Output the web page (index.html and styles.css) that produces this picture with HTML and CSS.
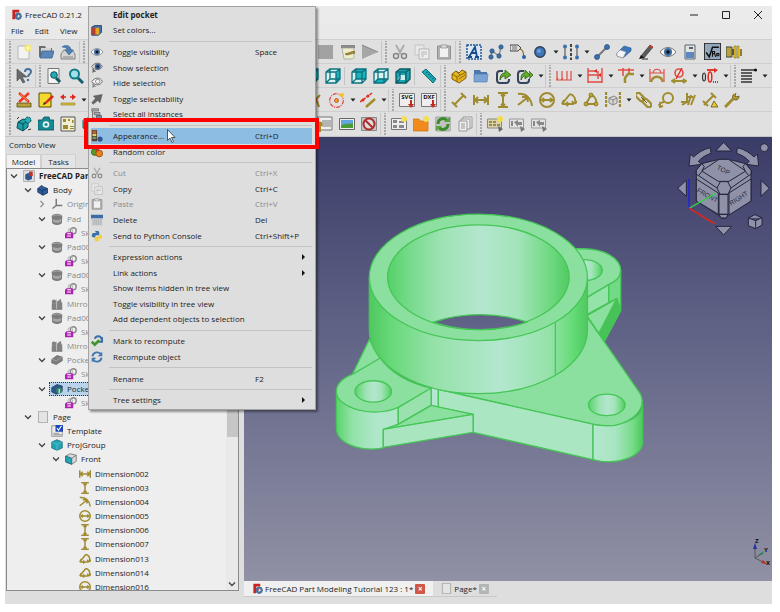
FILE: index.html
```html
<!DOCTYPE html>
<html lang="en">
<head>
<meta charset="utf-8">
<title>FreeCAD 0.21.2</title>
<link rel="stylesheet" href="styles.css">
</head>
<body>
<svg class="defs" aria-hidden="true">
  <symbol id="logo" viewBox="0 0 16 16"><path fill="#c8241f" d="M2 1h10v4H6v3h4v3H6v4H2z"/><circle cx="10.500" cy="10.500" r="3.500" fill="none" stroke="#47719f" stroke-width="3"/><path stroke="#47719f" stroke-width="1.500" d="M10.500 5.500v2M10.500 14v2M5.500 10.500h2M14 10.500h2M7 7l1 1M14 7l-1 1M7 14l1-1M14 14l-1-1"/></symbol>
  <symbol id="chev-d" viewBox="0 0 8 8"><path d="M1 2.500 4 5.500 7 2.500" fill="none" stroke="#444" stroke-width="1.300"/></symbol>
  <symbol id="chev-r" viewBox="0 0 8 8"><path d="M2.500 1 5.500 4 2.500 7" fill="none" stroke="#888" stroke-width="1.100"/></symbol>
  <symbol id="drop" viewBox="0 0 8 8"><path d="M1.500 2.500h5L4 5.500z" fill="#222"/></symbol>

  <symbol id="new" viewBox="0 0 16 16"><path d="M2 2h9l2 3v10H2z" fill="#f3f3f1" stroke="#aaa" stroke-width=".8"/><circle cx="12" cy="4" r="3.500" fill="#f5e96f"/><circle cx="12" cy="4" r="1.500" fill="#fffbd0"/></symbol>
  <symbol id="open" viewBox="0 0 16 16"><path d="M1 2h6l1 2h6v9H1z" fill="#6b6e70"/><path d="M3 4h10v5H3z" fill="#d5d5d5"/><path d="M2 14 4 7h12l-2 7z" fill="#5b87b8" stroke="#3a628f" stroke-width=".8"/></symbol>
  <symbol id="save" viewBox="0 0 16 16"><path d="M1 10 4 6h8l3 4v5H1z" fill="#d4d4d2" stroke="#777" stroke-width=".9"/><path d="M3 13h10" stroke="#888"/><path d="M2 3c4-3 9-1 9 3h2.500L9 11 5 6h2.500C7 4 5 3 2 3z" fill="#4f81b5" stroke="#315d8c" stroke-width=".6"/></symbol>
  <symbol id="whats" viewBox="0 0 16 16"><path d="M1 1v12l3-3 3 5 2-1-3-5h5z" fill="#666b6e" stroke="#444" stroke-width=".6"/><path d="M9 4c0-4 6-4 6 0 0 2-3 2-3 5" fill="none" stroke="#44729a" stroke-width="2"/><circle cx="12" cy="12" r="1.200" fill="#44729a"/></symbol>
  <symbol id="fit" viewBox="0 0 16 16"><path d="M2 .5h11v15H2z" fill="#f4f4f4" stroke="#777"/><circle cx="8" cy="7" r="3.300" fill="#25a9b5" stroke="#0c5962"/><path d="m10 10 4 4" stroke="#0c5962" stroke-width="3"/></symbol>
  <symbol id="zoom" viewBox="0 0 16 16"><circle cx="6.500" cy="6" r="4.500" fill="#a6dfe6" stroke="#0d7d8a" stroke-width="2"/><path d="m10 10 5 5" stroke="#0c616c" stroke-width="3"/></symbol>
  <symbol id="leave" viewBox="0 0 16 16"><path d="M1 11h14v4H1z" fill="#b6a13b" stroke="#594b10" stroke-width=".8"/><path d="m3 1 10 9M13 1 3 10" stroke="#ee3426" stroke-width="2.400"/><path d="m4 2 8 7" stroke="#f0a33a"/></symbol>
  <symbol id="sketch" viewBox="0 0 16 16"><path d="M1 1h12v14H1z" fill="#f6d92d" stroke="#5a4a08"/><path d="m6 11 8-8 2 2-8 7z" fill="#d42a1e"/><path d="m5 13 1-3 2 2z" fill="#222"/></symbol>
  <symbol id="leftright" viewBox="0 0 16 16"><path d="M0 5l4-3v6zM16 5l-4-3v6z" fill="#e2261c"/><path d="M3 5h3m4 0h3" stroke="#e2261c" stroke-width="1.500"/><path d="M1 11h14v2H1z" fill="#d9c23e" stroke="#8a7717" stroke-width=".6"/></symbol>
  <symbol id="blob" viewBox="0 0 16 16"><path d="m2 6 5-3 5 2v6l-5 4-6-3z" fill="#1a9fa9" stroke="#0a4f57"/><path d="M2 6 7 8l5-3M7 8v6" stroke="#0a4f57" fill="none"/><circle cx="12" cy="4" r="3" fill="#27aeb6" stroke="#0a4f57" stroke-dasharray="2 1"/><path d="M1 3l2-2M12 14l3-1" stroke="#333"/></symbol>
  <symbol id="camera" viewBox="0 0 16 16"><path d="M0 4h4l2-3h5l1 3h4v10H0z" fill="#138a94" stroke="#075059" stroke-width=".8"/><circle cx="8" cy="8.500" r="3.300" fill="#e8f2f2"/><circle cx="8" cy="8.500" r="1.600" fill="#138a94"/></symbol>
  <symbol id="macro" viewBox="0 0 16 16"><path d="M1 1h14v14H1z" fill="#f0eed4" stroke="#555"/><path d="M3 3h3v3H3zM8 3h2v2H8zM12 4h1.500v3H12zM3 9h5v4H3zM10 10h4v1h-4zM10 12h4v1h-4z" fill="#9c8a2f"/></symbol>

  <symbol id="stop" viewBox="0 0 16 16"><path d="M0 1h15v14H0z" fill="#a2a2a2"/></symbol>
  <symbol id="macroedit" viewBox="0 0 16 16"><path d="M1 1h14v3H1z" fill="#8a8a8a"/><path d="M2 4h12v9c0 2-2 2-3 2H4z" fill="#eeeecb" stroke="#999" stroke-width=".7"/><path d="m5 10 9-3 1 2-8 2z" fill="#b2913b" stroke="#57430e" stroke-width=".5"/></symbol>
  <symbol id="play" viewBox="0 0 16 16"><path d="M0 1v14l16-7z" fill="#a6a6a6"/><path d="M0 1l16 7" stroke="#888"/></symbol>
  <symbol id="cut" viewBox="0 0 16 16"><path d="M4 1l5 9M12 1l-5 9" stroke="#aaa" stroke-width="1.800"/><g fill="none" stroke="#888" stroke-width="1.500"><circle cx="4" cy="12" r="2.500"/><circle cx="12" cy="12" r="2.500"/></g></symbol>
  <symbol id="copy" viewBox="0 0 16 16"><path d="M1 1h9v10H1z" fill="#e8e8e8" stroke="#c4c4c4"/><path d="M5 5h10v10H5z" fill="#eee" stroke="#b3b3b3"/><path d="M7 8h6M7 10h6M7 12h3" stroke="#b5b5b5"/></symbol>
  <symbol id="paste" viewBox="0 0 16 16"><path d="M1.500 2h13v13h-13z" fill="#b0b0b0" stroke="#929292"/><path d="M4 4h8v9H4z" fill="#f1f1f1"/><path d="M5 1h6v3H5z" fill="#ddd" stroke="#888" stroke-width=".7"/></symbol>
  <symbol id="bigA" viewBox="0 0 16 16"><path d="M1 1h14v14H1z" fill="#dce8f4" stroke="#1e5794" stroke-width="1.500" stroke-dasharray="2 1"/><path d="m3 13 6-10 2 10M5 9h5M2 13h4m3 0h4" stroke="#174d8d" stroke-width="1.800" fill="none"/></symbol>
  <symbol id="nodes" viewBox="0 0 16 16"><path d="M3 13 4 7l7 5 2-9" fill="none" stroke="#888" stroke-width="1.300"/><g fill="#3c70b0" stroke="#22446f" stroke-width=".6"><circle cx="3" cy="13" r="2.200"/><circle cx="4" cy="7" r="2.200"/><circle cx="11" cy="12" r="2.200"/><circle cx="13" cy="3" r="2.200"/></g></symbol>
  <symbol id="tag" viewBox="0 0 16 16"><path d="M0 1h8l3 3-3 3H0z" fill="#ddd" stroke="#444"/><path d="M2 3h5M2 5h5" stroke="#777"/><path d="M10 5c4 1 3 4 4 8" fill="none" stroke="#876c1c" stroke-width="1.200"/><circle cx="14" cy="13" r="2" fill="#2c62a5"/></symbol>
  <symbol id="dot" viewBox="0 0 16 16"><circle cx="8" cy="8" r="5.200" fill="#3d76ba" stroke="#2d4058" stroke-width="1.400"/><circle cx="7" cy="7" r="2" fill="#6d9cd3"/></symbol>
  <symbol id="lines3" viewBox="0 0 16 16"><path d="M2 3v10M14 3v10" stroke="#777" stroke-width="1.500"/><path d="M8 0v16" stroke="#111" stroke-width="1.500" stroke-dasharray="3 1.500"/><g fill="#3c70b0"><circle cx="2" cy="2.500" r="2"/><circle cx="2" cy="13.500" r="2"/><circle cx="14" cy="2.500" r="2"/><circle cx="14" cy="13.500" r="2"/></g></symbol>
  <symbol id="seg" viewBox="0 0 16 16"><path d="M3 13 13 3" stroke="#777" stroke-width="2"/><circle cx="3" cy="13" r="2.500" fill="#3c70b0" stroke="#163a67" stroke-width=".6"/><circle cx="13" cy="3" r="2.500" fill="#3c70b0" stroke="#163a67" stroke-width=".6"/></symbol>
  <symbol id="eraser" viewBox="0 0 16 16"><path d="m1 9 7-7 7 2v3l-8 7-6-2z" fill="#3d77b9" stroke="#255081" stroke-width=".6"/><path d="m1 9 3-3 6 2-3 6-6-2z" fill="#f4f4f4" stroke="#999" stroke-width=".6"/></symbol>
  <symbol id="pencil" viewBox="0 0 16 16"><path d="m3 12 9-11 3 2-9 11z" fill="#5a5d60" stroke="#222" stroke-width=".6"/><path d="m12 1 3 2-1 2-3-2z" fill="#c93b2c"/><path d="M1 15l2-4 3 3z" fill="#111"/><path d="M4 15h6" stroke="#222"/></symbol>
  <symbol id="eye" viewBox="0 0 16 16"><path d="M0 8c4-6 12-6 16 0-4 6-12 6-16 0z" fill="#f5f5f5" stroke="#777"/><circle cx="8" cy="8" r="4" fill="#3f6ba3"/><circle cx="8" cy="8" r="1.800" fill="#111"/></symbol>
  <symbol id="calc" viewBox="0 0 16 16"><path d="M3 1h10v14H3z" fill="#dfe3e6" stroke="#59646b"/><path d="M4 8h8v6H4z" fill="#5b88bf"/><path d="M7 4h4" stroke="#333" stroke-width="1.500"/></symbol>
  <symbol id="rough" viewBox="0 0 16 16"><path d="M0 0h16v16H0z" fill="#93a7bd" stroke="#222" stroke-width="1.600"/><path d="M2 9l3 4 3-9h6" fill="none" stroke="#111" stroke-width="1.400"/><path d="M8 13V8h2v2H8m2 0 1 3m1-1h2v-2h-2z" fill="none" stroke="#111"/></symbol>
  <symbol id="weld" viewBox="0 0 16 16"><path d="M0 3h6v10H0z" fill="#b3a33f" stroke="#444"/><path d="M6 5h3v6H6z" fill="#555"/><path d="M8 2h2v12H8zM11 2h2v12h-2z" fill="#f4cb1e" stroke="#6a540b" stroke-width=".5"/><path d="M14 5h2v7h-2z" fill="#927f26"/></symbol>

  <symbol id="cube1" viewBox="0 0 16 16"><path d="M1 4 5 1h10v10l-4 4H1z" fill="#d8f1f2"/><path d="M11 5v10l4-4V1z" fill="#18b1bd"/><path d="M1 4 5 1h10v10l-4 4H1zM1 4h10v11M11 4l4-3M5 1v10M1 15l4-4h10" fill="none" stroke="#0d727d" stroke-width="1.300"/></symbol>
  <symbol id="cube2" viewBox="0 0 16 16"><path d="M1 4 5 1h10v10l-4 4H1z" fill="#d8f1f2"/><path d="M5 1h10v10H5z" fill="#18b1bd"/><path d="M1 4 5 1h10v10l-4 4H1zM1 4h10v11M11 4l4-3M5 1v10M1 15l4-4h10" fill="none" stroke="#0d727d" stroke-width="1.300"/></symbol>
  <symbol id="cube3" viewBox="0 0 16 16"><path d="M1 4 5 1h10v10l-4 4H1z" fill="#d8f1f2"/><path d="M1 15l4-4h10l-4 4z" fill="#18b1bd"/><path d="M1 4 5 1h10v10l-4 4H1zM1 4h10v11M11 4l4-3M5 1v10M1 15l4-4h10" fill="none" stroke="#0d727d" stroke-width="1.300"/></symbol>
  <symbol id="cube4" viewBox="0 0 16 16"><path d="M1 4 5 1h10v10l-4 4H1z" fill="#18a5b1" stroke="#0b5962" stroke-width="1.300"/><path d="M5 7h5v5H3z" fill="#cdeef0"/><path d="M1 4h10v11M11 4l4-3M5 5v6l-4 4" fill="none" stroke="#0b5962" stroke-width="1.200"/></symbol>
  <symbol id="ruler" viewBox="0 0 16 16"><path d="m1 4 4-3 10 10-3 4z" fill="#1aa9b5" stroke="#0b6b75"/><path d="m5 5 2-1m0 3 2-1m0 3 2-1m0 3 2-1" stroke="#0b5962" stroke-width=".8"/></symbol>
  <symbol id="gold" viewBox="0 0 16 16"><path d="m1 6 4-3 3 2 3-3 4 2v6l-7 5-7-4z" fill="#e4b51c" stroke="#7f600f"/><path d="m1 6 5 3 9-5M6 9v5M5 3l4 4M8 11l6-4" fill="none" stroke="#7f600f" stroke-width=".9"/></symbol>
  <symbol id="folder" viewBox="0 0 16 16"><path d="M1 2h6l1 2h6v10H1z" fill="#4c78ab"/><path d="M1 6h14l-1 8H1z" fill="#7ba3d3" stroke="#4c78ab" stroke-width=".6"/></symbol>
  <symbol id="link" viewBox="0 0 16 16"><path d="M8 3H5Q2 3 2 6v6q0 3 3 3h6q3 0 3-3v-1" fill="none" stroke="#33455c" stroke-width="2"/><path d="M5 12c0-5 2-7 5-7V2l6 5-6 4V8c-3 0-4 2-5 4z" fill="#63ac2e" stroke="#2d5e10" stroke-width=".8"/></symbol>
  <symbol id="links" viewBox="0 0 16 16"><path d="M7 3H4Q1 3 1 6v6q0 3 3 3h5q3 0 3-3v-1" fill="none" stroke="#33455c" stroke-width="2"/><path d="M4 12c0-5 1-7 4-7V2l5 5-5 4V8c-2 0-3 2-4 4zM12 3l4 4-4 4" fill="#63ac2e" stroke="#2d5e10" stroke-width=".8"/></symbol>
  <symbol id="r-chain" viewBox="0 0 16 16"><path d="M0 12h16M1 3v9M6 3v9M11 3v9M15 3v9M0 12l2-2M5 12l2-2" fill="none" stroke="#e24a40" stroke-width="1.200"/></symbol>
  <symbol id="r-coord" viewBox="0 0 16 16"><path d="M1 0v15M15 0v15M11 3v8M1 3h9M1 7h10M1 14h14" fill="none" stroke="#e24a40" stroke-width="1.400"/><path d="M10 1v4L7 3zM14 5v4l-3-2z" fill="#df2b20"/></symbol>
  <symbol id="r-chamfer" viewBox="0 0 16 16"><path d="M0 2h16M5 0v8M11 0v5" stroke="#e24a40" stroke-width="1.500"/><path d="M7 15v-5l3-4h6" fill="none" stroke="#a18e30" stroke-width="2.500"/></symbol>
  <symbol id="r-arc" viewBox="0 0 16 16"><path d="M1 1v13M15 1v13M1 5h14M4 5c1-5 7-5 8 0" fill="none" stroke="#e24a40" stroke-width="1.200"/><path d="M2 14c2-7 10-7 12 0" fill="none" stroke="#a18e30" stroke-width="2.500"/></symbol>
  <symbol id="r-dia" viewBox="0 0 16 16"><circle cx="8" cy="5" r="4" fill="none" stroke="#e24a40" stroke-width="1.600"/><path d="M5 11 11 0" stroke="#df2b20" stroke-width="1.300"/><path d="M1 13h14M4 11l-3 2 3 2M12 11l3 2-3 2" fill="none" stroke="#a18e30" stroke-width="2"/></symbol>
  <symbol id="r-fmt" viewBox="0 0 16 16"><ellipse cx="2" cy="9" rx="1.500" ry="4" fill="none" stroke="#333" stroke-width="1.200"/><ellipse cx="8" cy="9" rx="1.800" ry="5" fill="none" stroke="#df2b20" stroke-width="1.500"/><path d="M5 2h8" stroke="#df2b20" stroke-width="1.800"/><path d="M11 14h5" stroke="#df2b20" stroke-width="1.800" stroke-dasharray="1 1"/><path d="m12 0 4 2-4 3z" fill="#df2b20"/></symbol>
  <symbol id="hatch" viewBox="0 0 16 16"><path d="M0 2h16M0 5h11M0 8h11M0 11h11M0 14h11" stroke="#333" stroke-width="1.500"/><circle cx="14.500" cy="2" r="1.500" fill="#111"/></symbol>

  <symbol id="point" viewBox="0 0 16 16"><path d="M2 2c6 3 9 8 10 13M3 14 13 3" stroke="#9a8527" stroke-width="2" fill="none"/><circle cx="8" cy="8" r="2" fill="#f0441e"/></symbol>
  <symbol id="circ" viewBox="0 0 16 16"><circle cx="7.500" cy="8.500" r="6.800" fill="none" stroke="#e5473c" stroke-width="1.200" stroke-dasharray="4 1 1 1"/><circle cx="7.500" cy="8.500" r="2" fill="#e8a21c" stroke="#b3361a" stroke-width=".7"/><circle cx="13" cy="3" r="2" fill="#f2c81e"/></symbol>
  <symbol id="cline" viewBox="0 0 16 16"><path d="M0 10 12 1" stroke="#e12c20" stroke-width="1.500" stroke-dasharray="3 1"/><circle cx="3" cy="8" r="1.500" fill="#e12c20"/><circle cx="8" cy="4" r="1.500" fill="#e12c20"/><path d="m6 15 9-8" stroke="#a18c2a" stroke-width="2.500"/></symbol>
  <symbol id="plate" viewBox="0 0 16 16"><path d="M.5 1.500h15v13H.5z" fill="#eee" stroke="#777"/><path d="M11 8v4H9l3 4 3-4h-2V8z" fill="#c92a20"/></symbol>
  <symbol id="d-len" viewBox="0 0 16 16"><path class="olive" d="M3 13 13 3M1 10l5 5M10 1l5 5"/></symbol>
  <symbol id="d-h" viewBox="0 0 16 16"><path class="olive" d="M1 3v10M15 3v10M2 8h12M5 5 2 8l3 3M11 5l3 3-3 3"/></symbol>
  <symbol id="d-v" viewBox="0 0 16 16"><path class="olive" d="M3 1h10M3 15h10M8 2v12M6 4l2-2 2 2M6 12l2 2 2-2"/></symbol>
  <symbol id="d-r" viewBox="0 0 16 16"><path class="olive" d="M1 2c8-1 13 4 14 12M1 13l9-7M5 5h5l1 5"/></symbol>
  <symbol id="d-d" viewBox="0 0 16 16"><circle class="olive" cx="8" cy="8" r="7"/><path class="olive" d="M2 8h12M5 6 3 8l2 2M11 6l2 2-2 2"/></symbol>
  <symbol id="d-a" viewBox="0 0 16 16"><path class="olive" d="M1 12 9 2M1 12h12M9 2c4 1 6 5 5 10M1 12l2-4M7 14l-2-2 2-2M13 12l-2-3M14 12l2-3"/></symbol>
  <symbol id="d-a3" viewBox="0 0 16 16"><path class="olive" d="M3 12h10M3 12 8 3M8 3c4 1 6 5 5 9"/><g fill="#c2a62b" stroke="#7a681c" stroke-width=".7"><circle cx="3" cy="12" r="2"/><circle cx="8" cy="3" r="2"/><circle cx="13" cy="12" r="2"/></g></symbol>
  <symbol id="d-ext" viewBox="0 0 16 16"><path d="M1 0v16M15 0v16" stroke="#a08c30" stroke-width="2.400" stroke-dasharray="3 1"/><path d="m4 6 5-2 3 2v5l-4 2-4-2z" fill="#d5d5d5" stroke="#888"/><path d="m4 6 4 2 4-2M8 8v5" fill="none" stroke="#888"/></symbol>
  <symbol id="chain" viewBox="0 0 16 16"><g fill="none" stroke="#a08c30" stroke-width="2.200"><rect x="-1" y="2.500" width="10" height="5" rx="2.500" transform="rotate(45 4 5)"/><rect x="6" y="8.500" width="10" height="5" rx="2.500" transform="rotate(45 11 11)"/></g><path d="m5 5 6 6" stroke="#6e5e1c"/></symbol>
  <symbol id="balloon" viewBox="0 0 16 16"><circle class="olive" cx="10" cy="6" r="5"/><path class="olive" d="M6 10l-4 1v4M1 12l1 3 3-1"/></symbol>
  <symbol id="axo" viewBox="0 0 16 16"><path class="olive" d="M7 1v9H1M2 13l5-3M15 3l-4 10M11 3l-3 10M8 5h5"/></symbol>
  <symbol id="landmark" viewBox="0 0 16 16"><path class="olive" d="M2 13 12 3M1 9l5 5M9 1l5 5"/><path d="m12 9 4 6H9z" fill="#e7cb37" stroke="#5e4e10" stroke-width=".8"/></symbol>
  <symbol id="wrench" viewBox="0 0 16 16"><path d="m1 15 8-8" stroke="#a08c30" stroke-width="3"/><path d="M10 2c-3 3-1 6 2 6 2 0 3-2 3-4l-3 1-1-1 1-3" fill="#b59d31" stroke="#5e4e10" stroke-width=".8"/></symbol>

  <symbol id="symb" viewBox="0 0 16 16"><path d="M0 1h15v13H0z" fill="#eee" stroke="#777"/><path d="M5 4h9v7H5z" fill="#b5b5b5"/><circle cx="3" cy="8" r="2.500" fill="#a08d25"/><path d="M3 9v7" stroke="#a08d25" stroke-width="2"/></symbol>
  <symbol id="img" viewBox="0 0 16 16"><path d="M.5 2.500h15v11H.5z" fill="#eee" stroke="#666"/><path d="M2 4h12v8H2z" fill="#65a5df"/><path d="M2 10c4-4 8-1 12-3v5H2z" fill="#4c9b38"/></symbol>
  <symbol id="forbid" viewBox="0 0 16 16"><path d="M.5 1.500h15v13H.5z" fill="#c3c3c3" stroke="#888"/><circle cx="8" cy="8" r="5.500" fill="#ddd" stroke="#b02c2c" stroke-width="2"/><path d="m4 4 8 8" stroke="#b02c2c" stroke-width="2"/></symbol>
  <symbol id="page" viewBox="0 0 16 16"><path d="M.5 2.500h15v11H.5z" fill="#eee" stroke="#777"/><path d="M2 4h4v3H2zM8 5h5v2H8zM2 9h4v3H2zM8 9h5v3H8z" fill="#888"/><circle cx="13" cy="3" r="3" fill="#f2dd55"/></symbol>
  <symbol id="ofold" viewBox="0 0 16 16"><path d="M0 3h6l1 2h8v10H0z" fill="#f28a1c" stroke="#d26e08" stroke-width=".7"/><circle cx="13" cy="3" r="3" fill="#f2dd55"/></symbol>
  <symbol id="recomp" viewBox="0 0 16 16"><rect y="1" width="16" height="14" rx="2" fill="#c2c2c2" stroke="#999" stroke-width=".8"/><path d="M3 8c0-6 7-7 9-3M13 8c0 6-7 7-9 3" fill="none" stroke="#3c8a2b" stroke-width="3"/><path d="M9 6h6V1zM7 10H1v5z" fill="#53a638"/></symbol>
  <symbol id="pages" viewBox="0 0 16 16"><g fill="#eee" stroke="#999"><path d="M6 1h9v11H6z"/><path d="M4 3h9v10H4z"/><path d="M2 5h8v10H2z"/></g><path d="M4 8h4M4 10h4M4 12h4" stroke="#999"/></symbol>
  <symbol id="view-g" viewBox="0 0 16 16"><path d="M.5 3h14v9H.5z" fill="#e3e3e3" stroke="#999"/><path d="M2 5h2v5H2zM5 6l4-2v2h4v3H9v2z" fill="#888"/><path d="m11 10 5 3-4 3z" fill="#777"/></symbol>
  <symbol id="view-y" viewBox="0 0 16 16"><path d="M.5 3h14v9H.5z" fill="#d9d2aa" stroke="#888"/><path d="M2 5h3v2H2zM6 5h3v2H6zM2 8h3v2H2zM6 8h3v2H6zM10 8h3v2h-3z" fill="#998b49"/><path d="m11 10 5 3-4 3z" fill="#666"/><circle cx="13" cy="3" r="3" fill="#f0dd48"/></symbol>

  <symbol id="m-colors" viewBox="0 0 16 16"><path d="m1 4 4-2h9v9l-4 4H1z" fill="#3c6db0" stroke="#25354d"/><path d="M1 5h5v9H1z" fill="#b63c2d"/><path d="M6 5h5v9H6z" fill="#e2a824"/></symbol>
  <symbol id="m-showsel" viewBox="0 0 16 16"><path d="M1 6c4-6 12-6 14 0-2 5-10 6-14 0z" fill="#ddd" stroke="#555"/><circle cx="9" cy="6" r="4" fill="#3b5f90"/><circle cx="9" cy="6" r="1.500" fill="#111"/><path d="M2 8v7l2-2h3z" fill="#666"/></symbol>
  <symbol id="m-hidesel" viewBox="0 0 16 16"><path d="M1 6c4-6 12-6 14 0-2 6-10 6-14 0z" fill="#eee" stroke="#555"/><circle cx="9" cy="6" r="3" fill="none" stroke="#777"/><path d="M2 8v7l2-2h3z" fill="#888"/></symbol>
  <symbol id="m-arrow" viewBox="0 0 16 16"><path d="M15 2 3 4l3 3-5 6 2 2 6-5 3 3z" fill="#666" stroke="#444" stroke-width=".5"/></symbol>
  <symbol id="m-inst" viewBox="0 0 16 16"><path d="M1 1h9v3H1zM4 6h8v3H4z" fill="#aab" stroke="#666"/><path d="M2 4v9h3" fill="none" stroke="#555"/><path d="M7 10h7v5H7z" fill="#7a8ba5" stroke="#555"/></symbol>
  <symbol id="m-appear" viewBox="0 0 16 16"><path d="M1 0h7v15H1z" fill="#5c4030"/><path d="M2 1h5v3H2z" fill="#c0652f"/><path d="M2 5h5v3H2z" fill="#e8cf6c"/><path d="M2 9h5v3H2z" fill="#6c9a6a"/><circle cx="12" cy="12" r="3.500" fill="#2c5687"/></symbol>
  <symbol id="m-rand" viewBox="0 0 16 16"><circle cx="5" cy="8" r="4.500" fill="#589c2c" stroke="#37580f"/><circle cx="11" cy="10" r="4.500" fill="#e58219" stroke="#864607"/><circle cx="8" cy="4" r="3" fill="#bd3a2a"/></symbol>
  <symbol id="m-del" viewBox="0 0 16 16"><path d="M0 1h16v5H0z" fill="#3c6ca6"/><path d="M1 6h14v9H1z" fill="#c6cacd"/><path d="M4 7v8m3-8v8m3-8v8m3-8v8" stroke="#aaa"/></symbol>
  <symbol id="m-py" viewBox="0 0 16 16"><path d="M5 3q0-2 3-2 3 0 3 2v4H6v3H4Q1 10 1 7q0-3 3-3h3V3z" fill="#3a6ea5"/><path d="M11 6h1q3 0 3 3t-3 3H9v1h2q0 2-3 2-3 0-3-2V9h6z" fill="#f2cf3a"/></symbol>
  <symbol id="m-mark" viewBox="0 0 16 16"><path d="M5 5c2-5 8-4 9 0l1-2v6h-5" fill="none" stroke="#3b6ea8" stroke-width="2.500"/><path d="m1 9 4 4 6-6" fill="none" stroke="#43912c" stroke-width="3.500"/></symbol>
  <symbol id="m-recomp" viewBox="0 0 16 16"><path d="M2 7c1-6 9-7 12-2M14 9c-1 6-9 7-12 2" fill="none" stroke="#3f76b3" stroke-width="2.500"/><path d="M9 7h6V1zM7 9H1v6z" fill="#3f76b3"/></symbol>

  <symbol id="t-doc" viewBox="0 0 16 16"><rect x=".5" y=".5" width="15" height="15" rx="1" fill="#ddd" stroke="#999"/><path d="m3 6 4-2 5 2v6l-5 2-4-2z" fill="#2e558c"/><path d="M8 2h5v6H8z" fill="#c03328"/></symbol>
  <symbol id="t-body" viewBox="0 0 16 16"><path d="m1 6 5-4 3 2 5 2v6l-6 3-7-4z" fill="#2b5b9b" stroke="#17325a"/><path d="m1 6 6 3 7-3M7 9v6" fill="none" stroke="#17325a"/></symbol>
  <symbol id="t-axes" viewBox="0 0 16 16"><path d="M7 1v9h8M7 10l-5 4" stroke="#777" stroke-width="2" fill="none"/></symbol>
  <symbol id="t-pad" viewBox="0 0 16 16"><path d="M2 6h12v7c-2 3-10 3-12 0z" fill="#a5a5a5" stroke="#6c6c6c"/><path d="M1 4c3-4 11-4 14 0v3c-3 3-11 3-14 0zM2 11c3 3 9 3 12 0v3c-3 2-9 2-12 0z" fill="#7c7c7c"/><path d="M3 4c3-2 7-2 10 0" fill="none" stroke="#b5b5b5"/></symbol>
  <symbol id="t-sk" viewBox="0 0 16 16"><circle cx="11" cy="5" r="4" fill="none" stroke="#888" stroke-width="1.800"/><circle cx="7" cy="5" r="3" fill="none" stroke="#aaa" stroke-width="1.200"/><path d="M2 7h7c2 0 2 1 2 8H0V9z" fill="#ae22b2"/><path d="M3 9h5M3 12h5" stroke="#fff" stroke-width="1.600"/></symbol>
  <symbol id="t-mir" viewBox="0 0 16 16"><path d="M1 7h6v8H1zM8 5l5-4 1 5h1v9H8z" fill="#828282"/><path d="M7.500 2v13" stroke="#aaa"/><path d="M1 15h14" stroke="#666"/><circle cx="4" cy="5" r="3" fill="#828282"/></symbol>
  <symbol id="t-pock" viewBox="0 0 16 16"><path d="m1 7 7-5 7 2v5l-8 5-6-2z" fill="#7c7c7c" stroke="#707070"/><path d="m1 7 6 2 8-5" fill="none" stroke="#aaa"/></symbol>
  <symbol id="t-pockc" viewBox="0 0 16 16"><path d="m1 6 7-4 7 2v7l-8 4-6-3z" fill="#2d5789" stroke="#29415f"/><circle cx="11" cy="10" r="4" fill="#35856b"/><path d="M11 8v4m-1 1h2" stroke="#d8f3e4" stroke-width="1.500"/></symbol>
  <symbol id="t-page" viewBox="0 0 16 16"><path d="M2 .5h12v15H2z" fill="#e4e4e4" stroke="#999"/></symbol>
  <symbol id="t-tpl" viewBox="0 0 16 16"><path d="M1 1h14v14H1z" fill="#eee" stroke="#777"/><path d="M6 0h10v9H6z" fill="#1c46b8"/><path d="m8 4 2 3 4-6" stroke="#fff" stroke-width="1.500" fill="none"/><path d="M3 11h8M3 13h11" stroke="#777"/></symbol>
  <symbol id="t-proj" viewBox="0 0 16 16"><path d="m1 4 7-3 7 3v8l-7 3-7-3z" fill="#23a5b5" stroke="#126774"/><path d="m1 4 7 3 7-3M8 7v8" fill="none" stroke="#5fc0cb"/></symbol>
  <symbol id="t-front" viewBox="0 0 16 16"><path d="m1 4 6-3 8 2v8l-6 4-8-3z" fill="#d9d9d9" stroke="#666"/><path d="m1 4 8 3v8l-8-3z" fill="#23a5b5" stroke="#126774"/><path d="m9 7 6-4" stroke="#666"/></symbol>
</svg>

<div class="window">
  <header class="titlebar">
    <svg class="app-icon"><use href="#logo"/></svg>
    <span class="app-name">FreeCAD 0.21.2</span>
    <div class="controls">
      <button type="button" aria-label="Minimize"><svg viewBox="0 0 8 8"><path d="M0 4h8"/></svg></button>
      <button type="button" aria-label="Maximize"><svg viewBox="0 0 8 8"><path d="M.5.500h7v7h-7z"/></svg></button>
      <button type="button" aria-label="Close"><svg viewBox="0 0 8 8"><path d="m0 0 8 8M8 0 0 8"/></svg></button>
    </div>
  </header>
  <nav class="menubar"><button type="button">File</button><button type="button">Edit</button><button type="button">View</button></nav>

  <div class="toolbars">
    <div class="row">
      <div class="docked file-bar">
        <i class="grip"></i><button type="button" aria-label="New"><svg><use href="#new"/></svg></button><button type="button" aria-label="Open"><svg><use href="#open"/></svg></button><button type="button" aria-label="Save"><svg><use href="#save"/></svg></button><i class="grip"></i>
      </div>
      <button type="button" aria-label="Stop"><svg><use href="#stop"/></svg></button><button type="button" aria-label="Macros"><svg><use href="#macroedit"/></svg></button><button type="button" aria-label="Run"><svg><use href="#play"/></svg></button><i class="grip"></i>
      <button type="button" aria-label="Cut"><svg><use href="#cut"/></svg></button><button type="button" aria-label="Copy"><svg><use href="#copy"/></svg></button><button type="button" aria-label="Paste"><svg><use href="#paste"/></svg></button><i class="grip"></i>
      <button type="button" aria-label="Annotation"><svg><use href="#bigA"/></svg></button><button type="button" aria-label="Leader"><svg><use href="#nodes"/></svg></button><button type="button" aria-label="Rich text"><svg><use href="#tag"/></svg></button><button type="button" aria-label="Vertex"><svg><use href="#dot"/></svg></button><button type="button" class="drop" aria-label="More vertices"><svg><use href="#drop"/></svg></button>
      <button type="button" aria-label="Centerline"><svg><use href="#lines3"/></svg></button><button type="button" class="drop" aria-label="More centerlines"><svg><use href="#drop"/></svg></button><button type="button" aria-label="Line"><svg><use href="#seg"/></svg></button><button type="button" aria-label="Erase"><svg><use href="#eraser"/></svg></button><button type="button" aria-label="Line style"><svg><use href="#pencil"/></svg></button><button type="button" aria-label="Show all"><svg><use href="#eye"/></svg></button><button type="button" aria-label="Calculate"><svg><use href="#calc"/></svg></button><button type="button" aria-label="Roughness"><svg class="large"><use href="#rough"/></svg></button><button type="button" aria-label="Weld"><svg><use href="#weld"/></svg></button>
    </div>
    <div class="row">
      <div class="docked view-bar">
        <i class="grip"></i><button type="button" aria-label="Help"><svg><use href="#whats"/></svg></button><i class="grip"></i><button type="button" aria-label="Fit all"><svg><use href="#fit"/></svg></button><button type="button" aria-label="Zoom"><svg><use href="#zoom"/></svg></button>
      </div>
      <button type="button" aria-label="Top"><svg><use href="#cube2"/></svg></button><button type="button" aria-label="Right"><svg><use href="#cube1"/></svg></button><i class="sep"></i><button type="button" aria-label="Rear"><svg><use href="#cube2"/></svg></button><button type="button" aria-label="Bottom"><svg><use href="#cube3"/></svg></button><button type="button" aria-label="Left"><svg><use href="#cube4"/></svg></button><i class="sep"></i><button type="button" aria-label="Measure"><svg><use href="#ruler"/></svg></button><i class="grip"></i>
      <button type="button" aria-label="Part"><svg><use href="#gold"/></svg></button><button type="button" aria-label="Group"><svg><use href="#folder"/></svg></button><button type="button" aria-label="Link"><svg><use href="#link"/></svg></button><button type="button" aria-label="Sublink"><svg><use href="#links"/></svg></button><button type="button" class="drop" aria-label="More links"><svg><use href="#drop"/></svg></button><i class="grip"></i>
      <button type="button" aria-label="Chain dimension"><svg><use href="#r-chain"/></svg></button><button type="button" class="drop" aria-label="More chain"><svg><use href="#drop"/></svg></button><button type="button" aria-label="Coordinate dimension"><svg><use href="#r-coord"/></svg></button><button type="button" class="drop" aria-label="More coordinate"><svg><use href="#drop"/></svg></button><button type="button" aria-label="Chamfer"><svg><use href="#r-chamfer"/></svg></button><button type="button" class="drop" aria-label="More chamfer"><svg><use href="#drop"/></svg></button><button type="button" aria-label="Arc length"><svg><use href="#r-arc"/></svg></button><button type="button" aria-label="Prefix"><svg><use href="#r-dia"/></svg></button><button type="button" class="drop" aria-label="More prefix"><svg><use href="#drop"/></svg></button><button type="button" aria-label="Decimals"><svg><use href="#r-fmt"/></svg></button><button type="button" class="drop" aria-label="More decimals"><svg><use href="#drop"/></svg></button><i class="grip"></i>
      <button type="button" aria-label="Line attributes"><svg><use href="#hatch"/></svg></button><button type="button" class="drop" aria-label="More attributes"><svg><use href="#drop"/></svg></button>
    </div>
    <div class="row">
      <div class="docked sketch-bar">
        <i class="grip"></i><button type="button" aria-label="Leave"><svg><use href="#leave"/></svg></button><button type="button" aria-label="Edit sketch"><svg><use href="#sketch"/></svg></button><button type="button" aria-label="Extend"><svg><use href="#leftright"/></svg></button><button type="button" class="drop" aria-label="More extend"><svg><use href="#drop"/></svg></button>
      </div>
      <button type="button" aria-label="Intersection"><svg><use href="#point"/></svg></button><button type="button" aria-label="Circle lines"><svg><use href="#circ"/></svg></button><button type="button" class="drop" aria-label="More circles"><svg><use href="#drop"/></svg></button><button type="button" aria-label="Parallel"><svg><use href="#cline"/></svg></button><button type="button" class="drop" aria-label="More lines"><svg><use href="#drop"/></svg></button><i class="grip"></i>
      <button type="button" class="export"><svg><use href="#plate"/></svg><span>SVG</span></button><button type="button" class="export"><svg><use href="#plate"/></svg><span>DXF</span></button><i class="grip"></i>
      <button type="button" aria-label="Length"><svg><use href="#d-len"/></svg></button><button type="button" aria-label="Horizontal"><svg><use href="#d-h"/></svg></button><button type="button" aria-label="Vertical"><svg><use href="#d-v"/></svg></button><button type="button" aria-label="Radius"><svg><use href="#d-r"/></svg></button><button type="button" aria-label="Diameter"><svg><use href="#d-d"/></svg></button><button type="button" aria-label="Angle"><svg><use href="#d-a"/></svg></button><button type="button" aria-label="Three point angle"><svg><use href="#d-a3"/></svg></button><button type="button" aria-label="Extent"><svg><use href="#d-ext"/></svg></button><button type="button" class="drop" aria-label="More extent"><svg><use href="#drop"/></svg></button><button type="button" aria-label="Link dimension"><svg><use href="#chain"/></svg></button><button type="button" aria-label="Balloon"><svg><use href="#balloon"/></svg></button><button type="button" aria-label="Axonometric"><svg><use href="#axo"/></svg></button><button type="button" aria-label="Landmark"><svg><use href="#landmark"/></svg></button><button type="button" aria-label="Repair"><svg><use href="#wrench"/></svg></button>
    </div>
    <div class="row">
      <div class="docked page-bar">
        <i class="grip"></i><button type="button" aria-label="Bodies"><svg><use href="#blob"/></svg></button><button type="button" aria-label="Camera"><svg><use href="#camera"/></svg></button><button type="button" aria-label="Sheet"><svg><use href="#macro"/></svg></button><button type="button" aria-label="Solid"><svg><use href="#t-proj"/></svg></button>
      </div>
      <button type="button" aria-label="Symbol"><svg><use href="#symb"/></svg></button><button type="button" aria-label="Image"><svg><use href="#img"/></svg></button><button type="button" aria-label="Hide"><svg><use href="#forbid"/></svg></button><i class="grip"></i>
      <button type="button" aria-label="New page"><svg><use href="#page"/></svg></button><button type="button" aria-label="Page from template"><svg><use href="#ofold"/></svg></button><button type="button" aria-label="Redraw"><svg><use href="#recomp"/></svg></button><button type="button" aria-label="Print all"><svg><use href="#pages"/></svg></button><i class="grip"></i>
      <button type="button" aria-label="Insert view"><svg><use href="#view-y"/></svg></button><button type="button" aria-label="Share view"><svg><use href="#view-g"/></svg></button><button type="button" aria-label="Stack view"><svg><use href="#view-g"/></svg></button>
    </div>
  </div>

  <main class="workspace">
    <section class="combo">
      <h2>Combo View</h2>
      <div class="tabs"><button type="button" class="on">Model</button><button type="button">Tasks</button></div>
      <div class="treebox">
        <ul class="tree">
          <li class="l0 root"><svg class="chev"><use href="#chev-d"/></svg><svg><use href="#t-doc"/></svg><span>FreeCAD Par</span></li>
          <li class="l1"><svg class="chev"><use href="#chev-d"/></svg><svg><use href="#t-body"/></svg><span>Body</span></li>
          <li class="l2 off"><svg class="chev"><use href="#chev-r"/></svg><svg><use href="#t-axes"/></svg><span>Origin</span></li>
          <li class="l2 off"><svg class="chev"><use href="#chev-d"/></svg><svg><use href="#t-pad"/></svg><span>Pad</span></li>
          <li class="l3 off"><i class="chev"></i><svg><use href="#t-sk"/></svg><span>Sk</span></li>
          <li class="l2 off"><svg class="chev"><use href="#chev-d"/></svg><svg><use href="#t-pad"/></svg><span>Pad00</span></li>
          <li class="l3 off"><i class="chev"></i><svg><use href="#t-sk"/></svg><span>Sk</span></li>
          <li class="l2 off"><svg class="chev"><use href="#chev-d"/></svg><svg><use href="#t-pad"/></svg><span>Pad00</span></li>
          <li class="l3 off"><i class="chev"></i><svg><use href="#t-sk"/></svg><span>Sk</span></li>
          <li class="l2 off"><i class="chev"></i><svg><use href="#t-mir"/></svg><span>Mirro</span></li>
          <li class="l2 off"><svg class="chev"><use href="#chev-d"/></svg><svg><use href="#t-pad"/></svg><span>Pad00</span></li>
          <li class="l3 off"><i class="chev"></i><svg><use href="#t-sk"/></svg><span>Sk</span></li>
          <li class="l2 off"><i class="chev"></i><svg><use href="#t-mir"/></svg><span>Mirro</span></li>
          <li class="l2 off"><svg class="chev"><use href="#chev-d"/></svg><svg><use href="#t-pock"/></svg><span>Pocke</span></li>
          <li class="l3 off"><i class="chev"></i><svg><use href="#t-sk"/></svg><span>Sk</span></li>
          <li class="l2"><svg class="chev"><use href="#chev-d"/></svg><span class="picked"><svg><use href="#t-pockc"/></svg>Pocke</span></li>
          <li class="l3 off"><i class="chev"></i><svg><use href="#t-sk"/></svg><span>Sk</span></li>
          <li class="l1"><svg class="chev"><use href="#chev-d"/></svg><svg><use href="#t-page"/></svg><span>Page</span></li>
          <li class="l2"><i class="chev"></i><svg><use href="#t-tpl"/></svg><span>Template</span></li>
          <li class="l2"><svg class="chev"><use href="#chev-d"/></svg><svg><use href="#t-proj"/></svg><span>ProjGroup</span></li>
          <li class="l3"><svg class="chev"><use href="#chev-d"/></svg><svg><use href="#t-front"/></svg><span>Front</span></li>
          <li class="l4"><i class="chev"></i><svg><use href="#d-h"/></svg><span>Dimension002</span></li>
          <li class="l4"><i class="chev"></i><svg><use href="#d-v"/></svg><span>Dimension003</span></li>
          <li class="l4"><i class="chev"></i><svg><use href="#d-r"/></svg><span>Dimension004</span></li>
          <li class="l4"><i class="chev"></i><svg><use href="#d-d"/></svg><span>Dimension005</span></li>
          <li class="l4"><i class="chev"></i><svg><use href="#d-v"/></svg><span>Dimension006</span></li>
          <li class="l4"><i class="chev"></i><svg><use href="#d-v"/></svg><span>Dimension007</span></li>
          <li class="l4"><i class="chev"></i><svg><use href="#d-a"/></svg><span>Dimension013</span></li>
          <li class="l4"><i class="chev"></i><svg><use href="#d-a"/></svg><span>Dimension014</span></li>
          <li class="l4"><i class="chev"></i><svg><use href="#d-d"/></svg><span>Dimension016</span></li>
        </ul>
        <div class="scroll"><i class="thumb"></i><svg><use href="#chev-d"/></svg></div>
      </div>
    </section>

    <section class="view">
      <div class="canvas">
        <svg class="model" viewBox="244 136 528 445" role="img" aria-label="Flange part">
          <defs>
            <linearGradient id="inner"><stop offset="0" stop-color="#55d167"/><stop offset=".12" stop-color="#76da8b"/><stop offset=".3" stop-color="#9ee3b4"/><stop offset=".52" stop-color="#b4e6cf"/><stop offset=".72" stop-color="#a2e4b9"/><stop offset=".9" stop-color="#6dd97f"/><stop offset="1" stop-color="#52c962"/></linearGradient>
            <linearGradient id="outer"><stop offset="0" stop-color="#4fc860"/><stop offset=".1" stop-color="#67d979"/><stop offset=".3" stop-color="#96e1aa"/><stop offset=".6" stop-color="#b4e7cf"/><stop offset=".83" stop-color="#94e2a8"/><stop offset=".94" stop-color="#62da74"/><stop offset="1" stop-color="#4fc860"/></linearGradient>
            <linearGradient id="lugl"><stop offset="0" stop-color="#5bd36c"/><stop offset=".25" stop-color="#92e2a6"/><stop offset=".65" stop-color="#b0e7cb"/><stop offset="1" stop-color="#b0e7cb"/></linearGradient>
            <linearGradient id="lugr"><stop offset="0" stop-color="#b4e7cf"/><stop offset=".45" stop-color="#a8e5c1"/><stop offset=".8" stop-color="#76dc88"/><stop offset="1" stop-color="#4cc95e"/></linearGradient>
            <linearGradient id="through" x1="0" y1="0" x2="0" y2="1"><stop offset="0" stop-color="#5d5f84"/><stop offset="1" stop-color="#62648a"/></linearGradient>
          </defs>
          <g stroke="#45c656" stroke-width="1.300" stroke-linejoin="round">
            <path fill="#8bdf9f" d="M575 248h9a37 22 0 0 1 37 22c0 7-5 11-12 14l-22 13-22-20z"/>
            <ellipse cx="584" cy="269.500" rx="18.500" ry="10.500" fill="url(#inner)"/>
            <path fill="#94e3a8" d="m587 297 22-13v18l-22 12z"/>
            <path fill="#72da84" d="M609 284c7-3 12-7 12-14v40l-4-12-8 4z"/>
            <path fill="#8bdf9f" d="m587 315 30-17-17 36z"/>
            <path fill="#47c258" d="m617 298 4 12-17 32-5-9z"/>
            <path fill="#8bdf9f" d="m369 339-17 35 28-16z"/>
            <path fill="url(#lugr)" d="M593 423.700c22 5 50-4 50-20V441c0 15-25 25-50 18.300z"/>
            <path fill="#8bdf9f" d="M587 316 641 394c6 14-7 27-26 31-8 1-15 0-22-1.300L438 389V340z"/>
            <path fill="#aae6c1" d="m438 389 155 34.700v35.600L473 432v-18l-35-7z"/>
            <path fill="#b4e7cf" d="M431 387h7v20l-7-2z"/>
            <path fill="url(#outer)" d="M369 277v53a109.300 63.300 0 0 0 218.600 0v-53z"/>
            <path fill="none" d="M555.500 320v54"/>
            <ellipse cx="478.300" cy="276.700" rx="109.300" ry="63.300" fill="#8bdf9f"/>
            <ellipse cx="478.300" cy="276.500" rx="91" ry="52.500" fill="url(#inner)"/>
            <path fill="url(#through)" d="M433 321.500a91 52.500 0 0 1 94 0 91 52.500 0 0 1-94 0z"/>
            <path fill="url(#lugl)" d="M336 391v37c0 15 24 24 47 19.500V430l15-6v-17z"/>
            <path fill="#99e2ad" d="m398 407 33-20v18l-33 19z"/>
            <path fill="#8bdf9f" d="M352 374 380 357.500c11 15 28 25 51 30L398 407c-25 11-62 1-62-16 0-7 6-13 16-17z"/>
            <path fill="#8bdf9f" d="m398 424 33-19 42 9-90 15z"/>
            <path fill="#a9e6c0" d="m383 429 90-15v18l-90 15z"/>
            <ellipse cx="373" cy="391" rx="18.300" ry="10.700" fill="url(#inner)"/>
            <ellipse cx="607" cy="404.500" rx="18.300" ry="10.700" fill="url(#inner)"/>
          </g>
        </svg>
        <svg class="navcube" viewBox="0 18 336 342" role="img" aria-label="Navigation cube">
          <g fill="#8f91a9" stroke="#23253d" stroke-width="3" stroke-linejoin="round">
            <path d="m191 34 24 26h-48zM191 312l24-26h-48zM53 172l26-24v48zM328 172l-25-24v48z"/>
            <path d="M151 50c-22 5-38 16-50 28l-10-9-4 36 37-5-9-9c10-11 22-19 38-24zM232 50c22 5 38 16 50 28l10-9 4 36-37-5 9-9c-10-11-22-19-38-24z"/>
            <circle cx="313" cy="50" r="12"/>
            <path d="m109 118 16-20 52-13h28l52 13 16 20v92l-68 42-8 9h-13l-9-9-66-42z"/>
            <path d="m125 120 52-35h28l52 35-50 31h-32z"/>
            <path d="m109 144 66 42v64l-66-40zM207 186l66-42v66l-66 42z"/>
            <path d="m125 98 8 8-8 16-9 12-7-4v-12zM257 98l-8 8 8 16 9 12 7-4v-12z"/>
            <path d="M181 152h22l10 19-9 19h-24l-9-19zM177 190h27v60h-27zM177 250h27l-5 11h-16z"/>
            <path d="m116 134 55 37M266 134l-53 37"/>
            <path d="m265 261 20-10 21 9v22l-19 11-22-9zM265 261l22 8 19-9M287 269v24"/>
          </g>
          <g class="faces"><text transform="translate(169 114) rotate(28)">TOP</text><text transform="translate(109 182) rotate(29)">FRONT</text><text transform="translate(213 224) rotate(-32)">RIGHT</text></g>
          <path d="M87 232v-88" stroke="#2428d0" stroke-width="5"/><path d="m87 232 80-45" stroke="#35ce4a" stroke-width="4"/><path d="m87 232 77 46" stroke="#d5281c" stroke-width="5"/>
        </svg>
        <svg class="axes" viewBox="0 0 20 32" role="img" aria-label="Axis cross">
          <path d="M4 21V8M4 21l8-5M4 21l10 5" fill="none" stroke="#555"/>
          <path d="m4 6 2 6H2z" fill="#2b2f9c"/><path d="m13 14-2 4-4 0z" fill="#288453"/><path d="m16 27-6-1 2-3z" fill="#b3321f"/>
          <text x="4" y="6">Z</text><text x="13" y="15">Y</text><text x="15" y="28">X</text>
        </svg>
      </div>
      <div class="docs">
        <div class="doc on"><svg><use href="#logo"/></svg>FreeCAD Part Modeling Tutorial 123 : 1*<button type="button" aria-label="Close document">×</button></div>
        <div class="doc"><svg><use href="#t-page"/></svg>Page*<button type="button" aria-label="Close page">×</button></div>
      </div>
    </section>
  </main>
  <footer class="status"></footer>

  <div class="menu" role="menu">
    <button type="button" class="strong"><i></i>Edit pocket</button>
    <button type="button"><svg><use href="#m-colors"/></svg>Set colors...</button>
    <hr>
    <button type="button"><svg><use href="#eye"/></svg>Toggle visibility<kbd>Space</kbd></button>
    <button type="button"><svg><use href="#m-showsel"/></svg>Show selection</button>
    <button type="button"><svg><use href="#m-hidesel"/></svg>Hide selection</button>
    <button type="button"><svg><use href="#m-arrow"/></svg>Toggle selectability</button>
    <button type="button"><svg><use href="#m-inst"/></svg>Select all instances</button>
    <hr>
    <button type="button" class="hover"><svg><use href="#m-appear"/></svg>Appearance...<kbd>Ctrl+D</kbd></button>
    <button type="button"><svg><use href="#m-rand"/></svg>Random color</button>
    <hr>
    <button type="button" disabled><svg><use href="#cut"/></svg>Cut<kbd>Ctrl+X</kbd></button>
    <button type="button"><svg><use href="#copy"/></svg>Copy<kbd>Ctrl+C</kbd></button>
    <button type="button" disabled><svg><use href="#paste"/></svg>Paste<kbd>Ctrl+V</kbd></button>
    <button type="button"><svg><use href="#m-del"/></svg>Delete<kbd>Del</kbd></button>
    <button type="button"><svg><use href="#m-py"/></svg>Send to Python Console<kbd>Ctrl+Shift+P</kbd></button>
    <hr>
    <button type="button" class="sub"><i></i>Expression actions</button>
    <button type="button" class="sub"><i></i>Link actions</button>
    <button type="button"><i></i>Show items hidden in tree view</button>
    <button type="button"><i></i>Toggle visibility in tree view</button>
    <button type="button"><i></i>Add dependent objects to selection</button>
    <hr>
    <button type="button"><svg><use href="#m-mark"/></svg>Mark to recompute</button>
    <button type="button"><svg><use href="#m-recomp"/></svg>Recompute object</button>
    <hr>
    <button type="button"><i></i>Rename<kbd>F2</kbd></button>
    <hr>
    <button type="button" class="sub"><i></i>Tree settings</button>
  </div>
  <div class="callout"></div>
  <svg class="cursor" viewBox="0 0 9 14"><path d="M.5.500v11l2.500-2.500 2 4.500 1.500-1-2-4h3.500z" fill="#fff" stroke="#333" stroke-width=".8"/></svg>
</div>
</body>
</html>
```
FILE: styles.css
```css
* { box-sizing: border-box; }
body {
  margin: 0;
  padding: 6px 8px 8px 5px;
  background: #fff;
  color: #222;
  font: 8px/12px "Open Sans", "Noto Sans", sans-serif;
}
button { border: 0; padding: 0; margin: 0; background: none; color: inherit; font: inherit; }
svg { display: block; flex: none; }
.defs { position: absolute; width: 0; height: 0; }
.olive { fill: none; stroke: #a08c30; stroke-width: 2; }

.window {
  position: relative;
  display: flex;
  flex-direction: column;
  height: calc(100vh - 14px);
  background: #dedede;
}

/* title and menu bar */
.titlebar { display: flex; align-items: center; height: 17px; padding-left: 6px; background: #ebebeb; }
.app-icon { width: 11px; height: 11px; margin-right: 3px; }
.controls { display: flex; gap: 4px; margin-left: auto; }
.controls button { display: grid; place-items: center; width: 28px; height: 17px; }
.controls svg { width: 8px; height: 8px; fill: none; stroke: #222; overflow: visible; }
.menubar { display: flex; gap: 11px; height: 16px; padding: 2px 0 0 6px; background: #e9e9e9; }
.menubar button { height: 12px; }

/* toolbars */
.toolbars { padding-bottom: 1px; border-bottom: 1px solid #c4c4c4; }
.row { display: flex; align-items: center; height: 24px; border-top: 1px solid #cfcfcf; overflow: hidden; background: #e0e0e0; }
.docked { display: flex; align-items: center; flex: none; }
.file-bar { width: 310px; }
.view-bar { width: 295px; }
.sketch-bar { width: 299px; }
.page-bar { width: 309px; }
.row button { display: grid; place-items: center; flex: none; width: 22px; height: 22px; }
.row svg { width: 16px; height: 16px; }
.row svg.large { width: 17px; height: 17px; }
.row .drop { width: 9px; }
.row .drop svg { width: 8px; height: 8px; }
.grip { flex: none; width: 8px; height: 22px; border-left: 1px solid #c8c8c8; background: radial-gradient(circle at 1px 1px, #a9a9a9 1px, transparent 1px) 3px 2px / 2px 3px repeat-y; }
.docked > .grip:first-child { border-color: transparent; }
.sep { flex: none; width: 4px; height: 18px; border-left: 1px solid #c4c4c4; }
.row .export { font-size: 6px; font-weight: 700; line-height: 8px; color: #111; }
.export svg, .export span { grid-area: 1 / 1; }
.export span { align-self: start; padding-top: 4px; }

/* workspace */
.workspace { display: grid; grid-template-columns: 234px 1fr; column-gap: 5px; flex: 1; min-height: 0; }
.combo { display: flex; flex-direction: column; min-height: 0; padding: 0 0 6px 1px; }
.combo h2 { margin: 0; padding: 1px 0 0 3px; height: 17px; font-size: 8px; font-weight: 400; line-height: 14px; }
.tabs { display: flex; height: 14px; }
.tabs button { width: 35px; border: 1px solid #d0d0d0; border-bottom: 0; background: #e4e4e4; line-height: 11px; }
.tabs .on { width: 35px; background: #f1f1f1; }
.treebox { display: flex; flex: 1; min-height: 0; border: 1px solid #8a8a8a; background: #eee; overflow: hidden; }
.tree { display: grid; grid-auto-rows: 1fr; flex: 1; height: 425px; margin: 0; padding: 0; list-style: none; }
.tree li { display: flex; align-items: center; min-height: 0; white-space: nowrap; }
.tree svg { width: 12px; height: 12px; margin: 0 4px 0 2px; }
.tree .chev { width: 8px; height: 8px; margin: 0 3px; }
.tree .l1 { padding-left: 14px; }
.tree .l2 { padding-left: 28px; }
.tree .l3 { padding-left: 42px; }
.tree .l4 { padding-left: 56px; }
.root { font-weight: 700; }
.off { color: #888; }
.picked { display: flex; align-items: center; height: 14px; border: 1px dotted #333; background: #b9d4ea; }
.picked svg { margin-left: 1px; }
.scroll { display: flex; flex-direction: column; align-items: center; justify-content: space-between; width: 12px; background: #e9e9e9; }
.thumb { width: 11px; height: 268px; background: #c6c6c6; }
.scroll svg { margin-bottom: 2px; width: 8px; height: 8px; }

.view { display: flex; flex-direction: column; min-width: 0; min-height: 0; }
.canvas { position: relative; flex: 1; min-height: 0; background: linear-gradient(#3a3c68, #66688a 50%, #9091a4); }
.model { width: 100%; height: 100%; }
.navcube { position: absolute; top: 0; right: 0; width: 112px; height: 114px; }
.faces { fill: #2b2d42; font: 20px "Liberation Sans", sans-serif; }
.axes { position: absolute; right: 1px; bottom: 12px; width: 20px; height: 32px; overflow: visible; font: 700 6px "Liberation Sans", sans-serif; }
.docs { display: flex; height: 16px; }
.doc { display: flex; align-items: center; gap: 2px; padding: 0 8px; border-bottom: 1px solid #c9c9c9; }
.doc.on { background: #f0f0f0; }
.doc svg { width: 11px; height: 11px; }
.doc button { width: 10px; height: 10px; border-radius: 1px; background: #b5b5b5; color: #fff; font-weight: 700; line-height: 9px; }
.doc.on button { background: #cf5745; }
.status { height: 7px; }

/* context menu */
.menu {
  position: absolute;
  left: 83px;
  top: 0;
  display: flex;
  flex-direction: column;
  width: 228px;
  height: 404px;
  padding: 0 3px 1px 2px;
  border: 1px solid #a2a2a2;
  background: #dedede;
  box-shadow: 2px 2px 2px #0006;
}
.menu button { display: flex; align-items: center; flex: 5 1 0; min-height: 0; text-align: left; white-space: nowrap; }
.menu svg, .menu i { flex: none; width: 12px; height: 12px; margin-right: 10px; }
.menu kbd { width: 57px; margin-left: auto; font: inherit; }
.menu hr { flex: 2 1 0; width: calc(100% - 18px); margin: 0 0 0 18px; border: 0; background: linear-gradient(#c3c3c3, #c3c3c3) center / 100% 1px no-repeat; }
.menu .strong { font-weight: 700; }
.menu .hover { background: #8dbde3; }
.menu button:disabled { color: #8a8a8a; }
.sub::after { content: ""; margin: 0 7px 0 auto; border: 3px solid transparent; border-left-color: #111; border-right: 0; }
.callout { position: absolute; left: 79px; top: 112px; width: 235px; height: 31px; border: 4px solid #f00; }
.cursor { position: absolute; left: 162px; top: 123px; width: 9px; height: 14px; }
```
